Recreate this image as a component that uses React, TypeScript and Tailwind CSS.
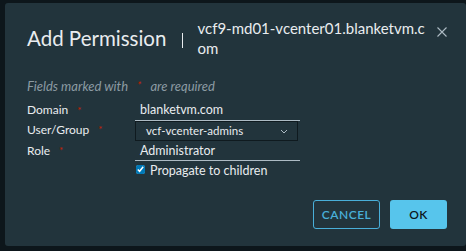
import React from "react";

export default function App() {
  return (
    <div className="w-[466px] h-[251px] bg-[#0d161b] pt-[3px] pl-[5px] overflow-hidden" style={{ fontFamily: "Lato, 'Noto Sans', sans-serif" }}>
      <div className="w-[461px] h-[243px] bg-[#22343c] rounded-[3px] flex flex-col">
        {/* Header */}
        <div className="flex items-start pl-[22px] pr-[19px] pt-[15px] h-[55px]">
          <div className="text-[20.5px] leading-[26px] text-[#e9ecef] mt-[7px] whitespace-nowrap">Add Permission</div>
          <div className="w-px h-[15px] bg-[#e9ecef] ml-[16px] mr-[14px] mt-[15px]" />
          <div className="text-[15px] leading-[20px] text-[#e9ecef] w-[232px] break-all">vcf9-md01-vcenter01.blanketvm.com</div>
          <button className="ml-auto mt-[9px] flex text-[#adbbc4]">
            <svg className="block" width="10" height="10" viewBox="0 0 10 10" fill="none" stroke="currentColor" strokeWidth="1.1">
              <path d="M0.5 0.5l9 9M9.5 0.5l-9 9" />
            </svg>
          </button>
        </div>

        {/* Body */}
        <div className="pl-[22px] mt-[20px] text-[12px] text-[#e9ecef]">
          <div className="italic text-[13px] text-[#8c9ba3] leading-[16px] flex">
            <span>Fields marked with</span>
            <span className="text-[#c92100] text-[11px] mx-[9px]">*</span>
            <span>are required</span>
          </div>

          <div className="mt-[6px] flex flex-col">
            <div className="flex items-start h-[21px]">
              <div className="w-[108px] flex leading-[20px]">
                <span>Domain</span>
                <span className="text-[#c92100] text-[10px] ml-[9px]">*</span>
              </div>
              <div className="w-[165px] h-[21px] border-b border-[#adbbc4] pl-[5px] text-[12.5px] leading-[20px]">blanketvm.com</div>
            </div>

            <div className="flex items-start h-[20px]">
              <div className="w-[108px] flex leading-[17px]">
                <span>User/Group</span>
                <span className="text-[#c92100] text-[10px] ml-[9px]">*</span>
              </div>
              <div className="w-[163px] h-[20px] border border-[#0f1a1f] bg-[#22343c] flex items-center pl-[10px] pr-[8px] text-[11.5px]">
                <span>vcf-vcenter-admins</span>
                <svg className="ml-auto" width="10" height="10" viewBox="0 0 10 10" fill="none" stroke="#adbbc4" strokeWidth="1">
                  <path d="M2 4l3 3 3-3" />
                </svg>
              </div>
            </div>

            <div className="flex items-start h-[20px]">
              <div className="w-[108px] flex leading-[19px]">
                <span>Role</span>
                <span className="text-[#c92100] text-[10px] ml-[9px]">*</span>
              </div>
              <div className="w-[165px] h-[20px] border-b border-[#adbbc4] pl-[5px] text-[12.5px] leading-[19px]">Administrator</div>
            </div>

            <div className="flex items-start h-[20px] pl-[109px]">
              <input type="checkbox" defaultChecked className="w-[9px] h-[9px] m-0 mt-[4px] accent-[#0079b8]" />
              <span className="ml-[5px] text-[12.5px] leading-[20px]">Propagate to children</span>
            </div>
          </div>
        </div>

        {/* Footer */}
        <div className="flex justify-end gap-[10px] pr-[19px] mt-[19px]">
          <button className="w-[67px] h-[29px] rounded-[3px] border border-[#49afd9] text-[#49afd9] text-[12px] font-semibold tracking-[0.5px]">CANCEL</button>
          <button className="w-[57px] h-[29px] rounded-[3px] bg-[#57c5ec] text-[#0d161b] text-[12px] font-semibold tracking-[0.5px]">OK</button>
        </div>
      </div>
    </div>
  );
}
